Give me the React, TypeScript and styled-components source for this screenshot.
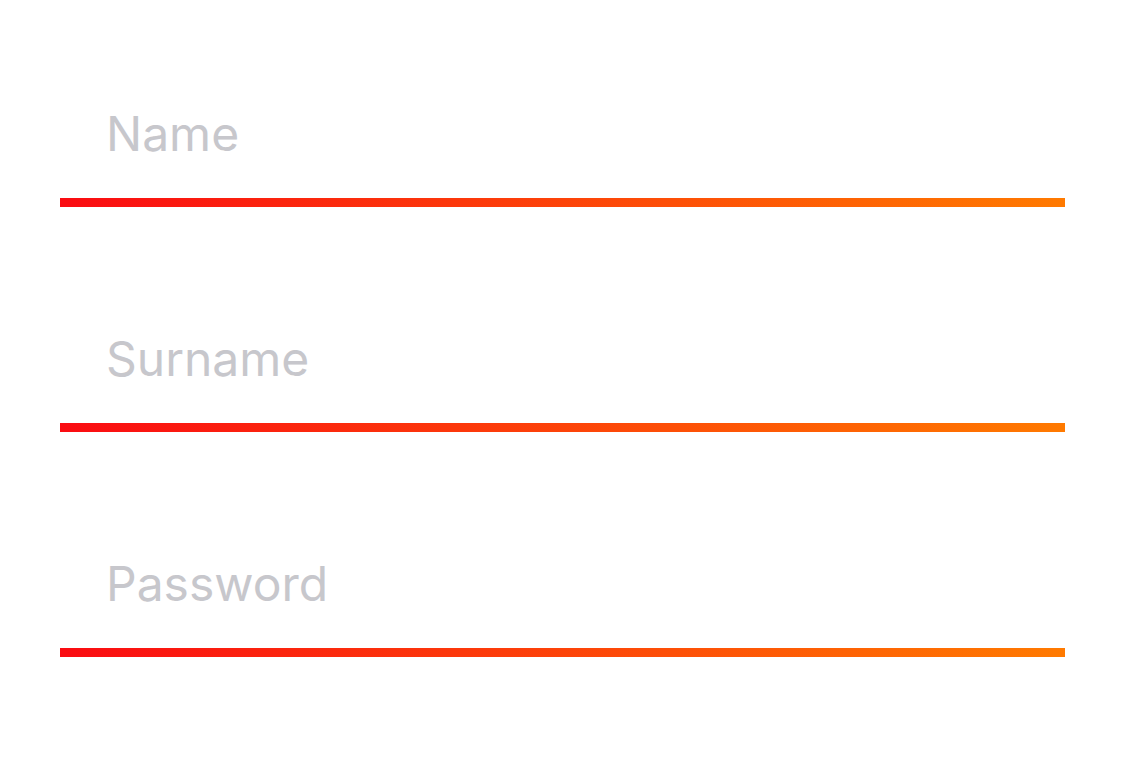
import React, { FC } from "react";
import styled, { createGlobalStyle } from "styled-components";

const GlobalStyle = createGlobalStyle`
  body {
    margin: 0;
    background: #ffffff;
    font-family: Inter, "Noto Sans", "Liberation Sans", sans-serif;
  }
`;

const Form = styled.form`
  display: flex;
  flex-direction: column;
  gap: 122px;
  padding: 104px 60px 0 60px;
`;

const Field = styled.label`
  display: flex;
  flex-direction: column;
  gap: 34px;
`;

const Input = styled.input`
  border: none;
  outline: none;
  background: transparent;
  padding: 0 0 0 46px;
  margin: 0;
  height: 60px;
  line-height: 60px;
  font-family: Inter, "Noto Sans", "Liberation Sans", sans-serif;
  font-size: 48px;
  color: #1c1c1e;

  &::placeholder {
    color: #c7c7cc;
  }
`;

const Underline = styled.div`
  height: 9px;
  background: linear-gradient(to right, #fa0c12, #ff7a00);
`;

interface TextInputProps {
  placeholder: string;
  type?: string;
}

const TextInput: FC<TextInputProps> = ({ placeholder, type = "text" }: TextInputProps) => {
  return (
    <Field>
      <Input type={type} placeholder={placeholder} />
      <Underline />
    </Field>
  );
};

const App: FC = () => {
  return (
    <>
      <GlobalStyle />
      <Form onSubmit={(e): void => e.preventDefault()}>
        <TextInput placeholder="Name" />
        <TextInput placeholder="Surname" />
        <TextInput placeholder="Password" type="password" />
      </Form>
    </>
  );
};

export default App;
